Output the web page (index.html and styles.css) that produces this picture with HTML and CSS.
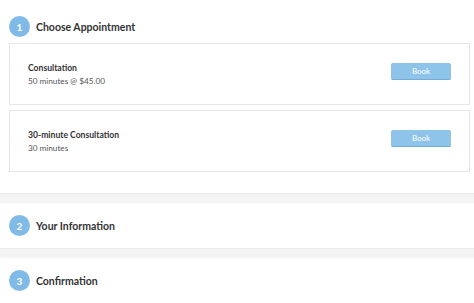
FILE: index.html
```html
<!DOCTYPE html>
<html lang="en">
<head>
    <meta charset="UTF-8">
    <meta name="viewport" content="width=device-width, initial-scale=1.0">
    <title>Book an Appointment</title>
    <link rel="stylesheet" href="styles.css">
</head>
<body>
    <section class="step step-first">
        <div class="step-header">
            <span class="step-number">1</span>
            <h2>Choose Appointment</h2>
        </div>

        <div class="appointment">
            <div class="appointment-info">
                <div class="appointment-name">Consultation</div>
                <div class="appointment-meta">50 minutes @ $45.00</div>
            </div>
            <button class="book-button">Book</button>
        </div>

        <div class="appointment">
            <div class="appointment-info">
                <div class="appointment-name">30-minute Consultation</div>
                <div class="appointment-meta">30 minutes</div>
            </div>
            <button class="book-button">Book</button>
        </div>
    </section>

    <div class="divider"></div>

    <section class="step">
        <div class="step-header">
            <span class="step-number">2</span>
            <h2>Your Information</h2>
        </div>
    </section>

    <div class="divider"></div>

    <section class="step">
        <div class="step-header">
            <span class="step-number">3</span>
            <h2>Confirmation</h2>
        </div>
    </section>
</body>
</html>
```

FILE: styles.css
```css
body {
    font-family: 'Lato', 'Open Sans', sans-serif;
    background-color: #fff;
    color: #333;
    margin: 0;
    padding: 0;
}

.step {
    padding: 12px 4px 12px 9px;
}

.step-first {
    padding-top: 16px;
    padding-bottom: 21px;
}

.step-header {
    display: flex;
    align-items: center;
    gap: 6px;
}

.step-first .step-header {
    margin-bottom: 6px;
}

.step-number {
    width: 21px;
    height: 21px;
    border-radius: 50%;
    background: #80bbe7;
    color: white;
    font-size: 10px;
    font-weight: bold;
    display: flex;
    align-items: center;
    justify-content: center;
}

h2 {
    margin: 0;
    font-size: 10.5px;
    font-weight: bold;
    color: #333;
}

.appointment {
    display: flex;
    justify-content: space-between;
    align-items: flex-start;
    border: 1px solid #e6e6e6;
    padding: 18px 18px 16px 18px;
    margin-bottom: 5px;
}

.appointment:last-child {
    margin-bottom: 0;
}

.appointment-name {
    font-size: 8.6px;
    font-weight: bold;
    line-height: 13px;
    color: #333;
}

.appointment-meta {
    font-size: 8.2px;
    line-height: 13px;
    color: #555;
}

.book-button {
    width: 60px;
    height: 17px;
    padding: 0;
    margin-top: 1px;
    background: #8ec3ea;
    color: white;
    font-family: inherit;
    font-size: 8px;
    border: none;
    border-bottom: 1px solid #74acd8;
    border-radius: 2px;
    cursor: pointer;
}

.divider {
    height: 9px;
    background: #f4f4f4;
    border-top: 1px solid #ececec;
}
```
